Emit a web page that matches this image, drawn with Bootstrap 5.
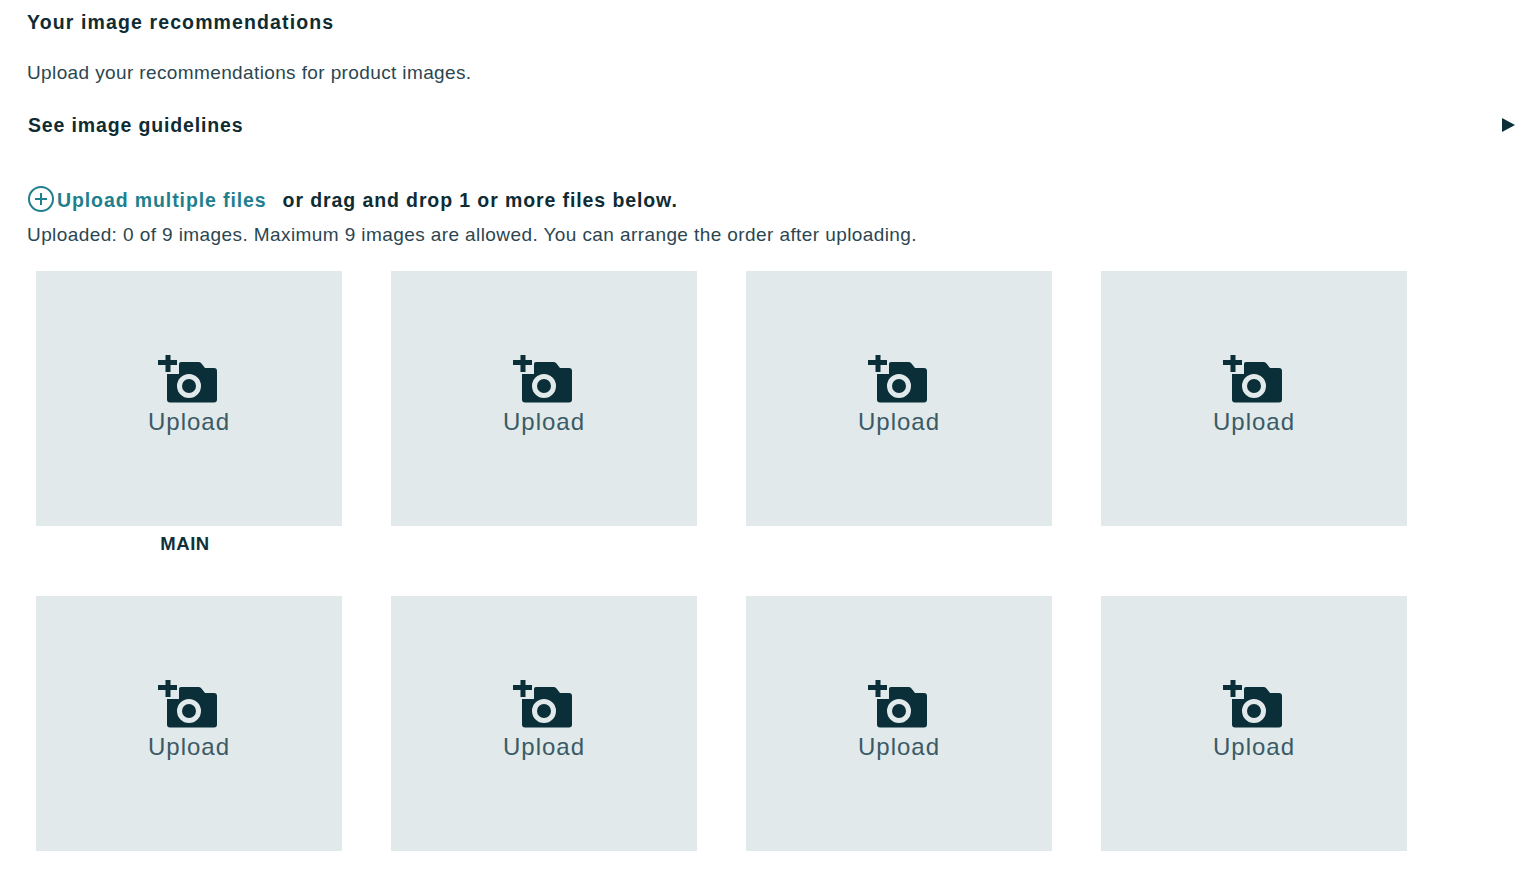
<!DOCTYPE html>
<html lang="en">
<head>
<meta charset="utf-8">
<title>Your image recommendations</title>
<link href="https://cdn.jsdelivr.net/npm/bootstrap@5.3.0/dist/css/bootstrap.min.css" rel="stylesheet">
<style>
html,body{height:876px;overflow:hidden;background:#fff}
body{font-family:"Liberation Sans",Arial,sans-serif;color:#0f2c33;font-size:19px;line-height:24px}
.pg{padding:10px 0 0 27px;width:1536px}
.ttl{font-size:19.5px;line-height:24px;font-weight:700;letter-spacing:1.12px;height:24px;margin:0}
.sub{margin:27px 0 0;height:24px;color:#2b4650;letter-spacing:.38px}
.guide{margin:28px 21px 0 1px;height:24px;font-size:19.5px;font-weight:700;letter-spacing:.85px}
.upl{margin:51px 0 0 1px;height:24px;font-size:19.5px;font-weight:700;letter-spacing:.9px}
.upl a{color:#1f7f8e;text-decoration:none}
.upl svg{margin:-3px 2px 0 -1px}
.gap1{margin-left:16px}
.cnt{margin:11px 0 0;height:24px;color:#2b4650;letter-spacing:.41px}
.slots{display:grid;grid-template-columns:repeat(4,306px);column-gap:49px;margin:24px 0 0 9px}
.slot{height:255px;background:#e1e9ea;padding-top:84px;font-size:24px;line-height:28px;color:#3a5a66;display:flex;flex-direction:column;align-items:center;letter-spacing:1px}
.slot svg{display:block;margin:0 0 4px -3px}
.cap{height:70px;padding:6px 8px 0 0;text-align:center;font-size:18.5px;line-height:24px;font-weight:700;letter-spacing:.6px;color:#10303a}
</style>
</head>
<body>
<svg width="0" height="0" class="d-block position-absolute"><defs>
<symbol id="cam" viewBox="0 0 60 49">
<path fill="#0b2f38" d="M9 19h12V9q0-2 2-2h18q1.500 0 2.500 1.500L47 13h9q3 0 3 3v28.500q0 3-3 3H12q-3 0-3-3z"/>
<path d="M17 7h3.500v10H17z" fill="#e1e9ea"/>
<rect x="0" y="5" width="19" height="5" fill="#0b2f38"/>
<rect x="7.500" y="0" width="5" height="17" fill="#0b2f38"/>
<circle cx="31" cy="31" r="9.500" fill="none" stroke="#e1e9ea" stroke-width="5"/>
</symbol>
</defs></svg>
<main class="pg">
<h1 class="ttl">Your image recommendations</h1>
<p class="sub">Upload your recommendations for product images.</p>
<div class="guide d-flex justify-content-between align-items-center"><span>See image guidelines</span>
<svg width="13" height="14" viewBox="0 0 13 14"><path fill="#0b2f38" d="M0 0l13 7-13 7z"/></svg></div>
<div class="upl d-flex align-items-center"><a href="#" class="d-flex align-items-center"><svg width="28" height="28" viewBox="0 0 28 28" fill="none" stroke="#1f7f8e" stroke-width="2"><circle cx="14" cy="14" r="12"/><path d="M14 8v12M8 14h12"/></svg>Upload multiple files</a><span class="gap1">or drag and drop 1 or more files below.</span></div>
<p class="cnt">Uploaded: 0 of 9 images. Maximum 9 images are allowed. You can arrange the order after uploading.</p>
<div class="slots">
<div><div class="slot"><svg width="60" height="49"><use href="#cam"/></svg>Upload</div><div class="cap">MAIN</div></div>
<div><div class="slot"><svg width="60" height="49"><use href="#cam"/></svg>Upload</div></div>
<div><div class="slot"><svg width="60" height="49"><use href="#cam"/></svg>Upload</div></div>
<div><div class="slot"><svg width="60" height="49"><use href="#cam"/></svg>Upload</div></div>
<div><div class="slot"><svg width="60" height="49"><use href="#cam"/></svg>Upload</div></div>
<div><div class="slot"><svg width="60" height="49"><use href="#cam"/></svg>Upload</div></div>
<div><div class="slot"><svg width="60" height="49"><use href="#cam"/></svg>Upload</div></div>
<div><div class="slot"><svg width="60" height="49"><use href="#cam"/></svg>Upload</div></div>
</div>
</main>
<script src="https://cdn.jsdelivr.net/npm/bootstrap@5.3.0/dist/js/bootstrap.bundle.min.js"></script>
</body>
</html>
